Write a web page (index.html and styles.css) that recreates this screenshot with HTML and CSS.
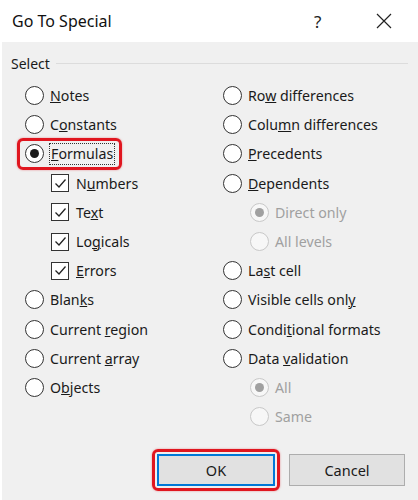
FILE: index.html
```html
<!DOCTYPE html>
<html>
<head>
<meta charset="utf-8">
<link rel="stylesheet" href="styles.css">
</head>
<body>
<div class="dialog">
  <div class="titlebar">
    <span class="title">Go To Special</span>
    <span class="help">?</span>
    <span class="close"><svg width="16" height="16" viewBox="0 0 16 16"><path d="M1 1L15 15M15 1L1 15" stroke="#222" stroke-width="1.2" fill="none"/></svg></span>
  </div>
  <div class="body">
    <div class="legend"><span>Select</span><div class="rule"></div></div>
    <div class="cols">
      <div class="col">
        <div class="row"><span class="radio"></span><span class="lbl"><u>N</u>otes</span></div>
        <div class="row"><span class="radio"></span><span class="lbl">C<u>o</u>nstants</span></div>
        <div class="row"><span class="hl"><span class="radio on"></span><span class="lbl focus"><u>F</u>ormulas</span></span></div>
        <div class="row sub"><span class="check"><svg width="15" height="15" viewBox="0 0 15 15"><path d="M2.5 7.5L6 11L12.5 3.5" stroke="#222" stroke-width="1.3" fill="none"/></svg></span><span class="lbl">N<u>u</u>mbers</span></div>
        <div class="row sub"><span class="check"><svg width="15" height="15" viewBox="0 0 15 15"><path d="M2.5 7.5L6 11L12.5 3.5" stroke="#222" stroke-width="1.3" fill="none"/></svg></span><span class="lbl">Te<u>x</u>t</span></div>
        <div class="row sub"><span class="check"><svg width="15" height="15" viewBox="0 0 15 15"><path d="M2.5 7.5L6 11L12.5 3.5" stroke="#222" stroke-width="1.3" fill="none"/></svg></span><span class="lbl">Lo<u>g</u>icals</span></div>
        <div class="row sub"><span class="check"><svg width="15" height="15" viewBox="0 0 15 15"><path d="M2.5 7.5L6 11L12.5 3.5" stroke="#222" stroke-width="1.3" fill="none"/></svg></span><span class="lbl"><u>E</u>rrors</span></div>
        <div class="row"><span class="radio"></span><span class="lbl">Blan<u>k</u>s</span></div>
        <div class="row"><span class="radio"></span><span class="lbl">Current <u>r</u>egion</span></div>
        <div class="row"><span class="radio"></span><span class="lbl">Current <u>a</u>rray</span></div>
        <div class="row"><span class="radio"></span><span class="lbl">O<u>b</u>jects</span></div>
      </div>
      <div class="col">
        <div class="row"><span class="radio"></span><span class="lbl">Ro<u>w</u> differences</span></div>
        <div class="row"><span class="radio"></span><span class="lbl">Colu<u>m</u>n differences</span></div>
        <div class="row"><span class="radio"></span><span class="lbl"><u>P</u>recedents</span></div>
        <div class="row"><span class="radio"></span><span class="lbl"><u>D</u>ependents</span></div>
        <div class="row sub2 dis"><span class="radio on"></span><span class="lbl">Direct only</span></div>
        <div class="row sub2 dis"><span class="radio"></span><span class="lbl">All levels</span></div>
        <div class="row"><span class="radio"></span><span class="lbl">La<u>s</u>t cell</span></div>
        <div class="row"><span class="radio"></span><span class="lbl">Visible cells onl<u>y</u></span></div>
        <div class="row"><span class="radio"></span><span class="lbl">Condi<u>t</u>ional formats</span></div>
        <div class="row"><span class="radio"></span><span class="lbl">Data <u>v</u>alidation</span></div>
        <div class="row sub2 dis"><span class="radio on"></span><span class="lbl">All</span></div>
        <div class="row sub2 dis"><span class="radio"></span><span class="lbl">Same</span></div>
      </div>
    </div>
    <div class="buttons">
      <span class="btnhl"><button class="btn ok">OK</button></span>
      <button class="btn">Cancel</button>
    </div>
  </div>
</div>
</body>
</html>
```
FILE: styles.css
```css
* { box-sizing: border-box; }
html, body { margin: 0; padding: 0; background: #fff; }
body { font-family: "Noto Sans", "Open Sans", sans-serif; color: #1a1a1a; }
.dialog { width: 418px; height: 500px; display: flex; flex-direction: column; }
.titlebar { height: 42px; background: #fff; display: flex; align-items: center; padding-left: 12px; }
.title { font-size: 16px; flex: 1; color: #111; }
.help { font-size: 17px; width: 20px; margin-right: 42px; color: #222; }
.close { width: 16px; height: 16px; margin-right: 26px; display: flex; }
.body { flex: 1; background: #f0f0f0; margin-left: 2px; position: relative; }
.legend { display: flex; align-items: center; height: 20px; margin-top: 11px; padding-left: 9px; padding-right: 10px; font-size: 14px; }
.rule { flex: 1; height: 1px; background: #dcdcdc; margin-left: 6px; margin-top: 1px; }
.cols { display: grid; grid-template-columns: 198px 1fr; padding-left: 23px; margin-top: 8px; }
.row { height: 29.2px; display: flex; align-items: center; font-size: 14.2px; }
.radio { width: 19px; height: 19px; border: 1px solid #333; border-radius: 50%; background: #fff; display: flex; align-items: center; justify-content: center; flex: none; }
.radio.on::after { content: ""; width: 9px; height: 9px; border-radius: 50%; background: #1a1a1a; }
.lbl { margin-left: 6px; white-space: nowrap; }
.lbl u { text-decoration-thickness: 1px; text-underline-offset: 1px; }
.sub { padding-left: 26px; }
.sub .lbl { margin-left: 7px; }
.sub2 { padding-left: 27px; }
.dis { color: #a0a0a0; }
.dis .radio { border-color: #c8c8c8; background: #f7f7f7; }
.dis .radio.on::after { background: #a0a0a0; }
.check { width: 18px; height: 18px; border: 1px solid #333; background: #fff; display: flex; align-items: center; justify-content: center; flex: none; }
.hl { display: flex; align-items: center; border: 3px solid #e0161f; border-radius: 6px; margin-left: -8px; padding: 3px 4px 3px 5px; height: 32px; box-shadow: 0 0 2px rgba(224,22,31,0.5); }
.focus { border: 1px dotted #333; padding: 0 1px; margin-left: 5px; line-height: 20px; }
.buttons { position: absolute; left: 155px; top: 412px; display: flex; gap: 14px; align-items: center; }
.btnhl { border: 3px solid #e0161f; border-radius: 6px; padding: 2px; display: flex; box-shadow: 0 0 2px rgba(224,22,31,0.5); margin: -5px; }
.btn { width: 116px; height: 32px; background: #e1e1e1; border: 1px solid #adadad; font-family: inherit; font-size: 14.5px; color: #1a1a1a; padding: 0; }
.btn.ok { border: 2px solid #0078d7; width: 118px; }
```
